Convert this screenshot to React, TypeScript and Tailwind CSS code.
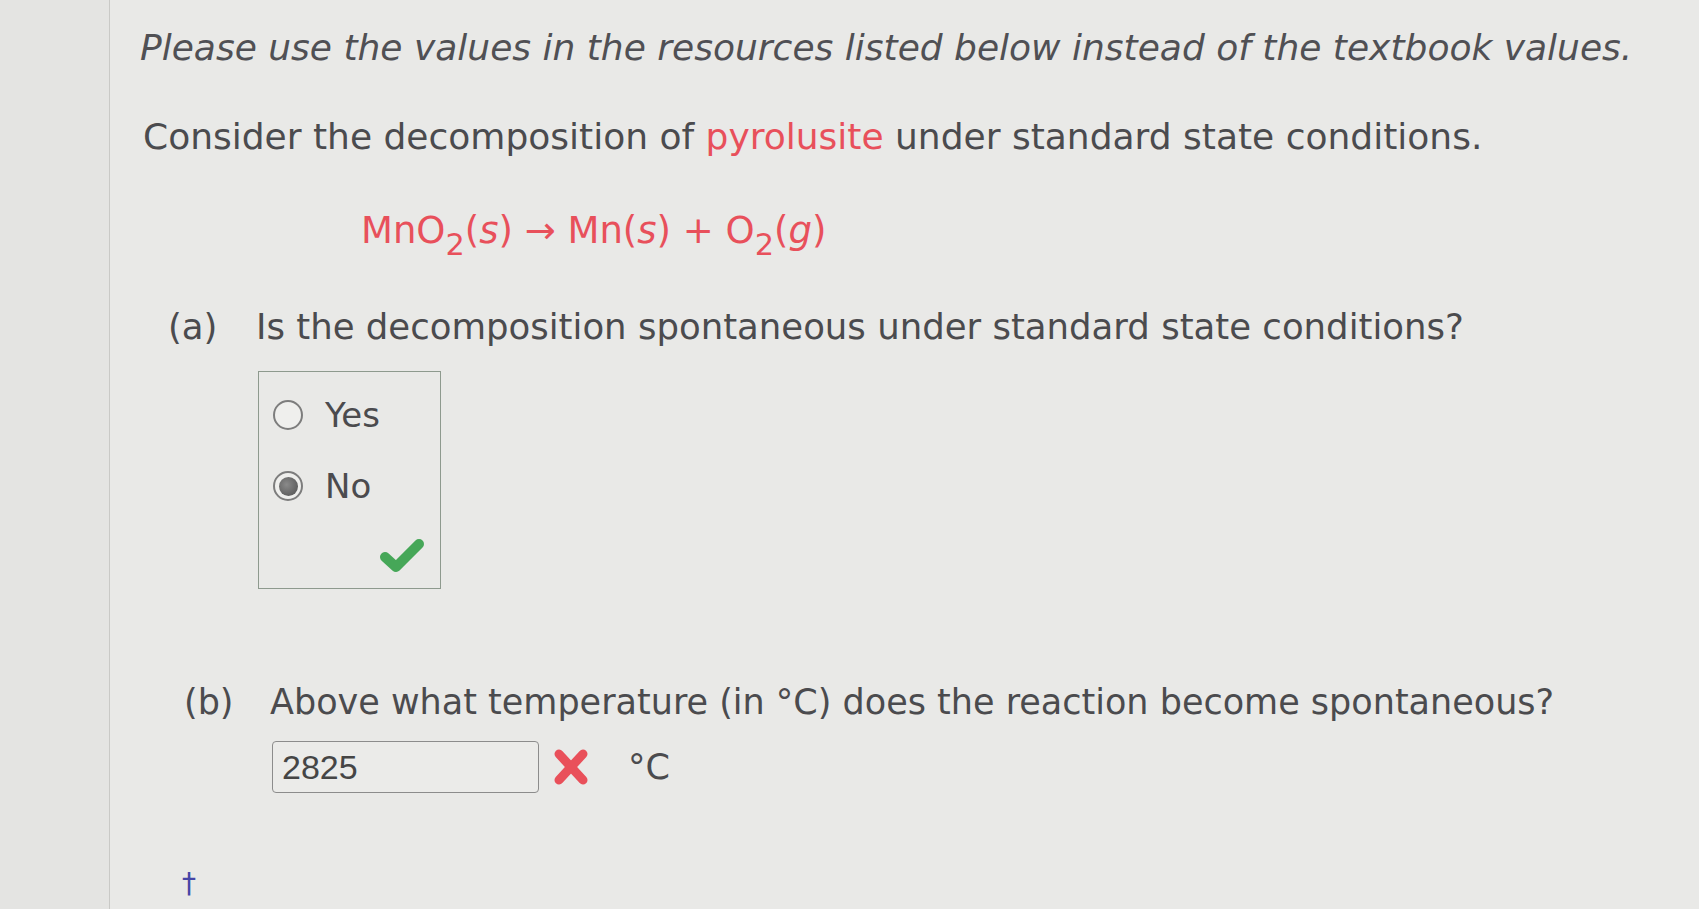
import React from 'react'

function Radio({ checked }: { checked?: boolean }) {
  return (
    <span className="flex h-[30px] w-[30px] shrink-0 items-center justify-center rounded-full border-[2.5px] border-[#7d7d7d] bg-[#efefed]">
      {checked && (
        <span className="h-[19px] w-[19px] rounded-full bg-[radial-gradient(circle_at_40%_40%,#8a8a8a,#4f4f4f)]" />
      )}
    </span>
  )
}

function CheckMark() {
  return (
    <svg width="44" height="36" viewBox="0 0 44 36" aria-hidden>
      <polyline points="5,20 16,30 39,7" fill="none" stroke="#46a758" strokeWidth="10" strokeLinejoin="round" strokeLinecap="round" />
    </svg>
  )
}

function CrossMark() {
  return (
    <svg width="36" height="38" viewBox="0 0 36 38" aria-hidden>
      <g stroke="#e9505a" strokeWidth="9" strokeLinecap="round">
        <line x1="6" y1="6" x2="30" y2="32" />
        <line x1="30" y1="6" x2="6" y2="32" />
      </g>
    </svg>
  )
}

export default function App() {
  return (
    <div className="flex h-[909px] w-full overflow-hidden bg-[#e9e9e7] font-['DejaVu_Sans',Verdana,sans-serif] text-[#4b4b4e]">
      {/* left margin strip of the page */}
      <aside className="w-[110px] shrink-0 border-r border-[#c9c9c6] bg-[#e4e4e2]" />

      <main className="flex-1 pl-[30px] pt-[26px]">
        <p className="text-[36px] italic leading-[44px] text-[#505054]">
          Please use the values in the resources listed below instead of the textbook values.
        </p>

        <p className="mt-[45px] pl-[3px] text-[36px] leading-[44px]">
          Consider the decomposition of <span className="text-[#e8505b]">pyrolusite</span> under standard state conditions.
        </p>

        <p className="ml-[221px] mt-[50px] text-[37px] leading-[44px] text-[#e8505b]">
          MnO<sub className="bottom-[-0.4em] text-[0.82em]">2</sub>(<i>s</i>) → Mn(<i>s</i>) + O<sub className="bottom-[-0.4em] text-[0.82em]">2</sub>(<i>g</i>)
        </p>

        {/* part a */}
        <div className="ml-[28px] mt-[52px] flex text-[35.5px] leading-[44px]">
          <span className="w-[88px] shrink-0">(a)</span>
          <span>Is the decomposition spontaneous under standard state conditions?</span>
        </div>

        <div className="ml-[118px] mt-[22px] flex h-[218px] w-[183px] flex-col border-[1.5px] border-[#8e9a8e] pl-[14px] pt-[21px]">
          <label className="flex h-[44px] items-center gap-[22px] text-[34px]">
            <Radio />
            <span>Yes</span>
          </label>
          <label className="mt-[27px] flex h-[44px] items-center gap-[22px] text-[34px]">
            <Radio checked />
            <span>No</span>
          </label>
          <div className="mb-[15px] mr-[16px] mt-auto self-end">
            <CheckMark />
          </div>
        </div>

        {/* part b */}
        <div className="ml-[44px] mt-[91px] flex text-[35px] leading-[44px]">
          <span className="w-[86px] shrink-0">(b)</span>
          <span>Above what temperature (in °C) does the reaction become spontaneous?</span>
        </div>

        <div className="ml-[132px] mt-[17px] flex items-center">
          <div className="flex h-[52px] w-[267px] items-center rounded-[4px] border-[1.5px] border-[#8c8c8c] bg-[#ebebe9] pl-[9px] font-['Liberation_Sans',Arial,sans-serif] text-[34px] text-[#454545]">
            2825
          </div>
          <span className="ml-[14px]">
            <CrossMark />
          </span>
          <span className="ml-[39px] text-[35px]">°C</span>
        </div>

        <div className="ml-[42px] mt-[76px] text-[28px] leading-[28px] text-[#4646a6]">†</div>
      </main>
    </div>
  )
}
